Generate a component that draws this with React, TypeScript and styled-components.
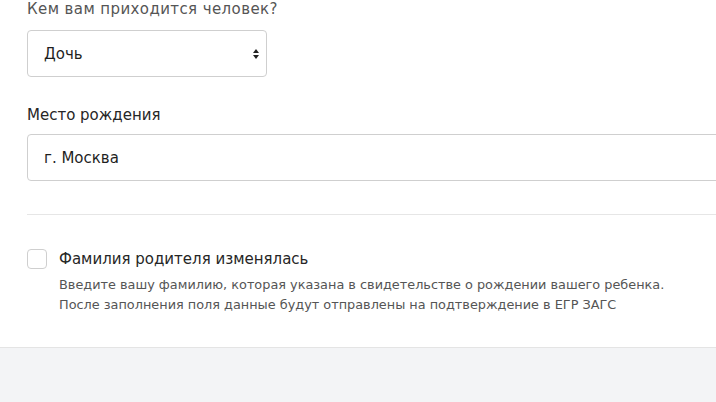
import styled, { createGlobalStyle } from "styled-components";

const GlobalStyle = createGlobalStyle`
	html, body {
		margin: 0;
		padding: 0;
		background: #ffffff;
		overflow: hidden;
	}
	body {
		font-family: "DejaVu Sans", "Noto Sans", sans-serif;
	}
`;

function SelectArrows() {
	return (
		<svg width="8" height="12" viewBox="0 0 8 12">
			<path d="M4 1 L7 5 L1 5 Z" fill="#222" />
			<path d="M4 11 L7 7 L1 7 Z" fill="#222" />
		</svg>
	);
}

export default function App() {
	return (
		<>
			<GlobalStyle />
			<Page>
				<Form>
					<Field>
						<Label muted>Кем вам приходится человек?</Label>
						<SelectBox>
							<Select defaultValue="daughter">
								<option value="daughter">Дочь</option>
								<option value="son">Сын</option>
							</Select>
							<ArrowSlot>
								<SelectArrows />
							</ArrowSlot>
						</SelectBox>
					</Field>
					<Field spaced>
						<Label>Место рождения</Label>
						<Input defaultValue="г. Москва" />
					</Field>
					<Divider />
					<CheckRow>
						<Checkbox type="checkbox" />
						<CheckLabel>Фамилия родителя изменялась</CheckLabel>
					</CheckRow>
					<Hint>
						Введите вашу фамилию, которая указана в свидетельстве о рождении вашего ребенка.
						<br />
						После заполнения поля данные будут отправлены на подтверждение в ЕГР ЗАГС
					</Hint>
				</Form>
				<Footer />
			</Page>
		</>
	);
}

const Page = styled.div`
	display: flex;
	flex-direction: column;
	min-height: 402px;
	width: 716px;
	overflow: hidden;
`;

const Form = styled.div`
	display: flex;
	flex-direction: column;
	padding: 0 0 32px 27px;
	width: 760px;
`;

const Field = styled.div<{ spaced?: boolean }>`
	display: flex;
	flex-direction: column;
	gap: ${(p) => (p.spaced ? "10px" : "12px")};
	margin-top: ${(p) => (p.spaced ? "29px" : "0")};
`;

const Label = styled.div<{ muted?: boolean }>`
	font-size: 15px;
	line-height: 18px;
	letter-spacing: ${(p) => (p.muted ? "0.4px" : "0")};
	color: ${(p) => (p.muted ? "#555555" : "#262626")};
`;

const SelectBox = styled.div`
	position: relative;
	width: 240px;
`;

const Select = styled.select`
	appearance: none;
	width: 100%;
	height: 47px;
	box-sizing: border-box;
	border: 1px solid #cfcfcf;
	border-radius: 4px;
	background: #ffffff;
	padding: 0 32px 0 16px;
	font-family: inherit;
	font-size: 15px;
	color: #1f1f1f;
	outline: none;
`;

const ArrowSlot = styled.span`
	position: absolute;
	right: 7px;
	top: 18px;
	display: flex;
	pointer-events: none;
`;

const Input = styled.input`
	width: 100%;
	height: 47px;
	box-sizing: border-box;
	border: 1px solid #cfcfcf;
	border-radius: 4px;
	padding: 0 16px;
	font-family: inherit;
	font-size: 15px;
	color: #1f1f1f;
	outline: none;
`;

const Divider = styled.div`
	height: 1px;
	background: #e6e6e6;
	margin: 33px 0 34px;
`;

const CheckRow = styled.label`
	display: flex;
	align-items: center;
	gap: 12px;
	height: 20px;
`;

const Checkbox = styled.input`
	appearance: none;
	margin: 0;
	width: 20px;
	height: 20px;
	box-sizing: border-box;
	border: 1px solid #cfcfcf;
	border-radius: 4px;
	background: #ffffff;
`;

const CheckLabel = styled.span`
	font-size: 15px;
	line-height: 20px;
	color: #262626;
`;

const Hint = styled.p`
	margin: 6px 0 0 32px;
	font-size: 12.85px;
	line-height: 20px;
	color: #555555;
`;

const Footer = styled.div`
	flex: 1;
	border-top: 1px solid #e4e4e4;
	background: #f3f4f6;
`;
